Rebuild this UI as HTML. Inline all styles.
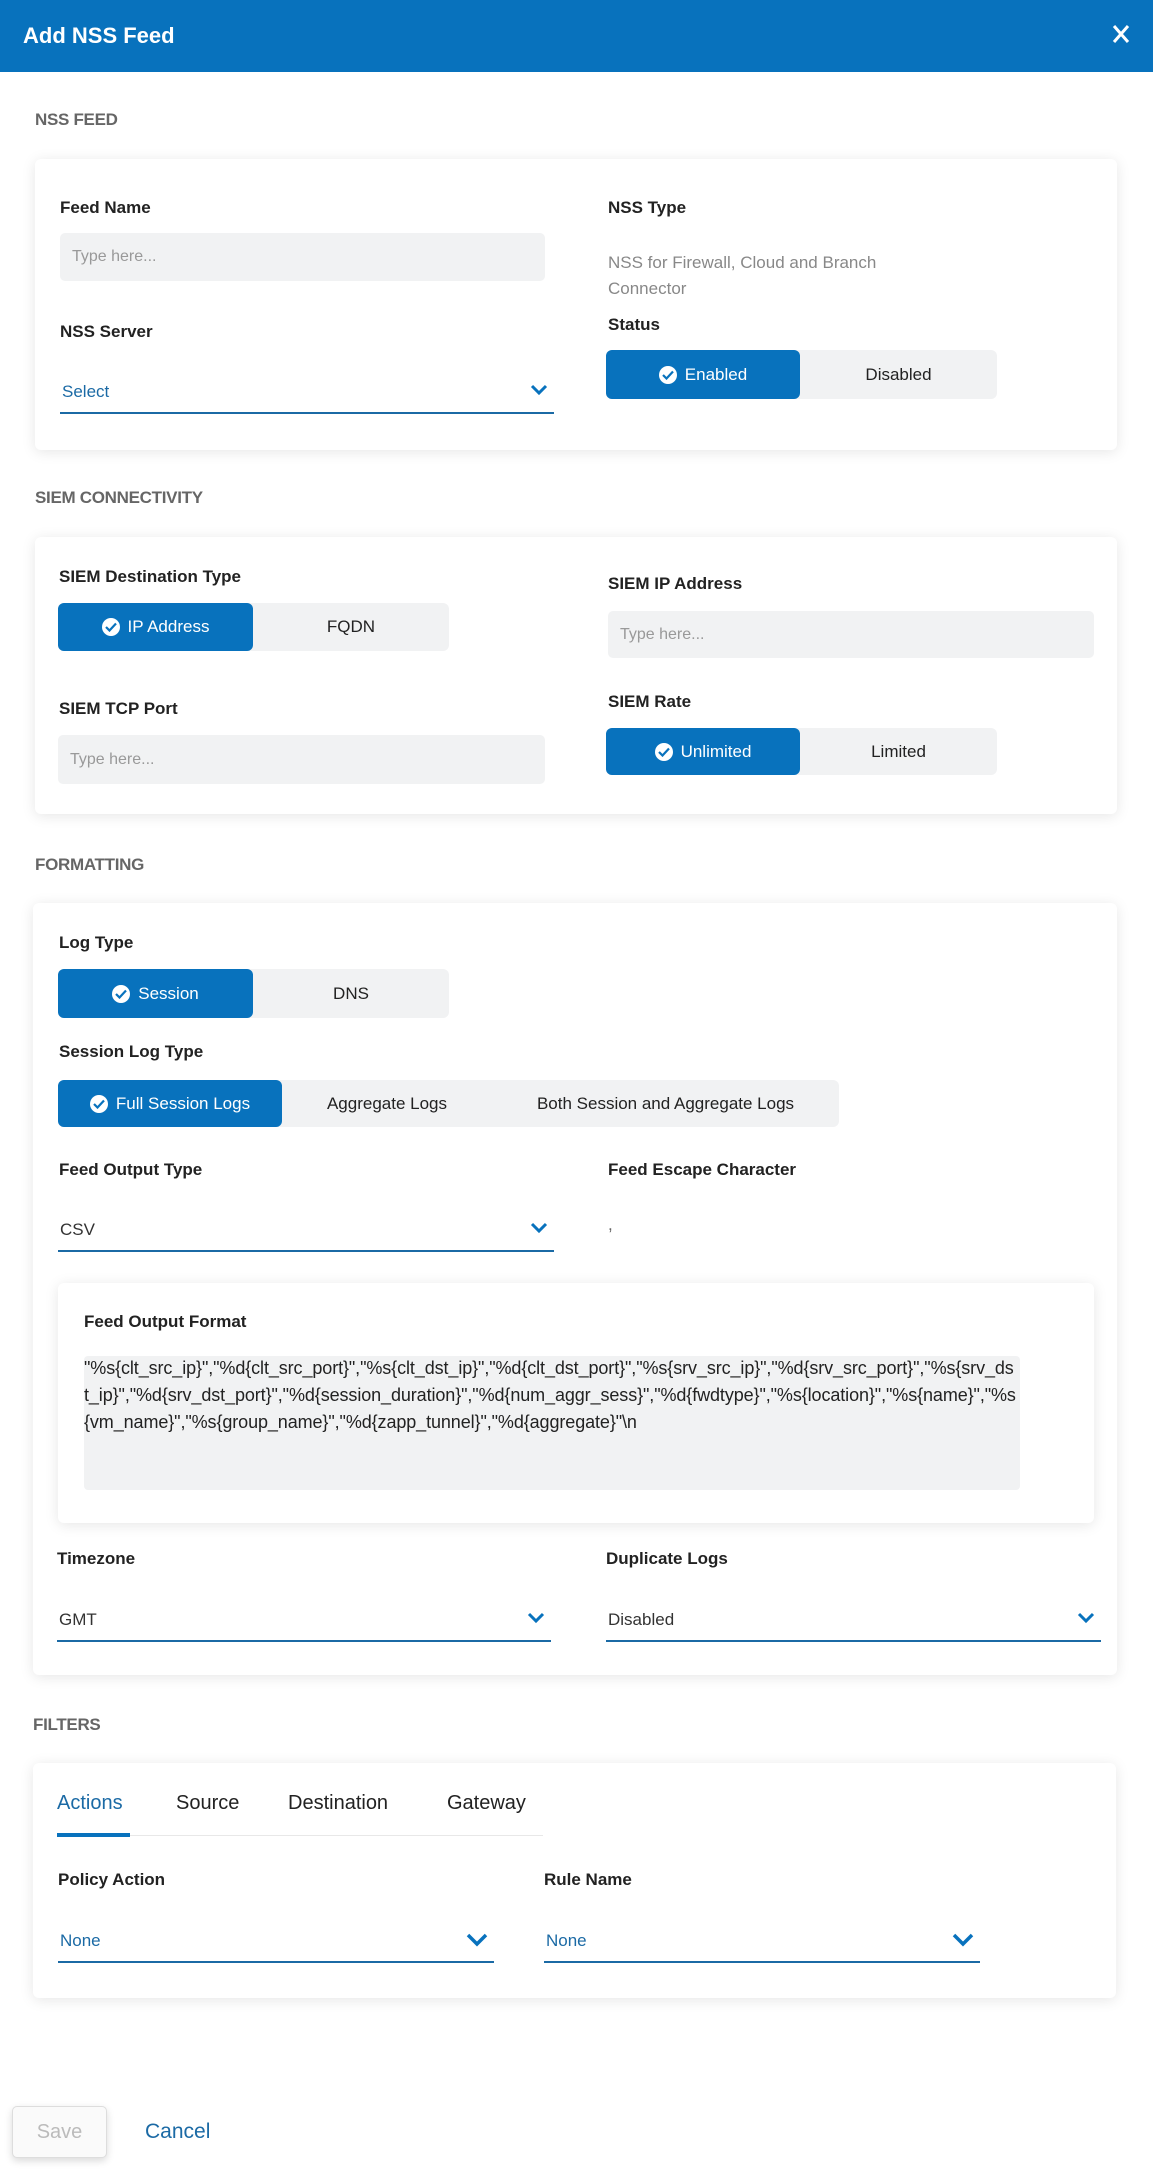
<!DOCTYPE html>
<html><head><meta charset="utf-8"><style>
*{margin:0;padding:0;box-sizing:border-box}
body{width:1153px;height:2171px;position:relative;background:#fff;font-family:"Liberation Sans",sans-serif;color:#222;overflow:hidden}
.a{position:absolute}
.t{position:absolute;line-height:24px;white-space:nowrap}
.lbl{font-size:17px;font-weight:bold;color:#222}
.sec{font-size:17px;color:#666;font-weight:bold;letter-spacing:-0.3px}
.card{position:absolute;background:#fff;border-radius:6px;box-shadow:0 2px 14px rgba(0,0,0,0.10)}
.inp{position:absolute;background:#f1f2f3;border-radius:5px;font-size:16px;color:#999;padding-left:12px;display:flex;align-items:center}
.sel{position:absolute;border-bottom:2px solid #1b6aa5;height:40px}
.sel span{position:absolute;left:2px;top:6px;font-size:17px;line-height:24px}
.sel svg{position:absolute;right:6px;top:10px}
.tog{position:absolute;background:#f1f2f3;border-radius:6px;display:flex}
.tog div{display:flex;align-items:center;justify-content:center;font-size:17px;color:#222;border-radius:6px;height:100%}
.tog .on{background:#0872bd;color:#fff}
.ck{display:inline-block;width:18px;height:18px;border-radius:50%;background:#fff;margin-right:8px;position:relative}
.ck svg{position:absolute;left:3px;top:4px}
</style></head><body>
<div class="a" style="left:0;top:0;width:1153px;height:72px;background:#0872bd"></div>
<div class="t" style="left:23px;top:24px;font-size:22px;font-weight:bold;color:#fff">Add NSS Feed</div>
<svg class="a" style="left:1111px;top:24px" width="20" height="20" viewBox="0 0 20 20"><path d="M3 2 L17 18 M17 2 L3 18" stroke="#fff" stroke-width="3"/></svg>

<div class="t sec" style="left:35px;top:108px">NSS FEED</div>
<div class="card" style="left:35px;top:159px;width:1082px;height:291px"></div>
<div class="t lbl" style="left:60px;top:196px">Feed Name</div>
<div class="inp" style="left:60px;top:233px;width:485px;height:48px">Type here...</div>
<div class="t lbl" style="left:608px;top:196px">NSS Type</div>
<div class="t" style="left:608px;top:250px;font-size:17px;color:#888;line-height:26px;white-space:normal;width:330px">NSS for Firewall, Cloud and Branch Connector</div>
<div class="t lbl" style="left:60px;top:320px">NSS Server</div>
<div class="sel" style="left:60px;top:374px;width:494px"><span style="color:#1b6aa5">Select</span><svg width="18" height="12" viewBox="0 0 18 12"><path d="M2 2 L9 9 L16 2" stroke="#0872bd" stroke-width="3" fill="none"/></svg></div>
<div class="t lbl" style="left:608px;top:313px">Status</div>
<div class="tog" style="left:606px;top:350px;width:391px;height:49px"><div class="on" style="width:194px"><span class="ck"><svg width="12" height="10" viewBox="0 0 12 10"><path d="M1 5 L4.5 8.5 L11 1.5" stroke="#0872bd" stroke-width="2.2" fill="none"/></svg></span>Enabled</div><div style="flex:1">Disabled</div></div>

<div class="t sec" style="left:35px;top:486px">SIEM CONNECTIVITY</div>
<div class="card" style="left:35px;top:537px;width:1082px;height:277px"></div>
<div class="t lbl" style="left:59px;top:565px">SIEM Destination Type</div>
<div class="tog" style="left:58px;top:603px;width:391px;height:48px"><div class="on" style="width:195px"><span class="ck"><svg width="12" height="10" viewBox="0 0 12 10"><path d="M1 5 L4.5 8.5 L11 1.5" stroke="#0872bd" stroke-width="2.2" fill="none"/></svg></span>IP Address</div><div style="flex:1">FQDN</div></div>
<div class="t lbl" style="left:608px;top:572px">SIEM IP Address</div>
<div class="inp" style="left:608px;top:611px;width:486px;height:47px">Type here...</div>
<div class="t lbl" style="left:59px;top:697px">SIEM TCP Port</div>
<div class="inp" style="left:58px;top:735px;width:487px;height:49px">Type here...</div>
<div class="t lbl" style="left:608px;top:690px">SIEM Rate</div>
<div class="tog" style="left:606px;top:728px;width:391px;height:47px"><div class="on" style="width:194px"><span class="ck"><svg width="12" height="10" viewBox="0 0 12 10"><path d="M1 5 L4.5 8.5 L11 1.5" stroke="#0872bd" stroke-width="2.2" fill="none"/></svg></span>Unlimited</div><div style="flex:1">Limited</div></div>

<div class="t sec" style="left:35px;top:853px">FORMATTING</div>
<div class="card" style="left:33px;top:903px;width:1084px;height:772px"></div>
<div class="t lbl" style="left:59px;top:931px">Log Type</div>
<div class="tog" style="left:58px;top:969px;width:391px;height:49px"><div class="on" style="width:195px"><span class="ck"><svg width="12" height="10" viewBox="0 0 12 10"><path d="M1 5 L4.5 8.5 L11 1.5" stroke="#0872bd" stroke-width="2.2" fill="none"/></svg></span>Session</div><div style="flex:1">DNS</div></div>
<div class="t lbl" style="left:59px;top:1040px">Session Log Type</div>
<div class="tog" style="left:58px;top:1080px;width:781px;height:47px"><div class="on" style="width:224px"><span class="ck"><svg width="12" height="10" viewBox="0 0 12 10"><path d="M1 5 L4.5 8.5 L11 1.5" stroke="#0872bd" stroke-width="2.2" fill="none"/></svg></span>Full Session Logs</div><div style="width:210px">Aggregate Logs</div><div style="flex:1">Both Session and Aggregate Logs</div></div>
<div class="t lbl" style="left:59px;top:1158px">Feed Output Type</div>
<div class="sel" style="left:58px;top:1212px;width:496px"><span style="color:#333">CSV</span><svg width="18" height="12" viewBox="0 0 18 12"><path d="M2 2 L9 9 L16 2" stroke="#0872bd" stroke-width="3" fill="none"/></svg></div>
<div class="t lbl" style="left:608px;top:1158px">Feed Escape Character</div>
<div class="t" style="left:608px;top:1213px;font-size:17px;color:#666">,</div>
<div class="card" style="left:58px;top:1283px;width:1036px;height:240px"></div>
<div class="t lbl" style="left:84px;top:1310px">Feed Output Format</div>
<div class="a" style="left:84px;top:1356px;width:936px;height:134px;background:#f1f2f3;border-radius:4px"></div>
<div class="a" style="left:84px;top:1355px;width:934px;font-size:18px;line-height:27px;color:#222;word-break:break-all;letter-spacing:-0.1px">"%s{clt_src_ip}","%d{clt_src_port}","%s{clt_dst_ip}","%d{clt_dst_port}","%s{srv_src_ip}","%d{srv_src_port}","%s{srv_dst_ip}","%d{srv_dst_port}","%d{session_duration}","%d{num_aggr_sess}","%d{fwdtype}","%s{location}","%s{name}","%s{vm_name}","%s{group_name}","%d{zapp_tunnel}","%d{aggregate}"\n</div>
<div class="t lbl" style="left:57px;top:1547px">Timezone</div>
<div class="sel" style="left:57px;top:1602px;width:494px"><span style="color:#333">GMT</span><svg width="18" height="12" viewBox="0 0 18 12"><path d="M2 2 L9 9 L16 2" stroke="#0872bd" stroke-width="3" fill="none"/></svg></div>
<div class="t lbl" style="left:606px;top:1547px">Duplicate Logs</div>
<div class="sel" style="left:606px;top:1602px;width:495px"><span style="color:#333">Disabled</span><svg width="18" height="12" viewBox="0 0 18 12"><path d="M2 2 L9 9 L16 2" stroke="#0872bd" stroke-width="3" fill="none"/></svg></div>

<div class="t sec" style="left:33px;top:1713px">FILTERS</div>
<div class="card" style="left:33px;top:1763px;width:1083px;height:235px"></div>
<div class="t" style="left:57px;top:1791px;font-size:20px;color:#1b6aa5">Actions</div>
<div class="t" style="left:176px;top:1791px;font-size:20px;color:#222">Source</div>
<div class="t" style="left:288px;top:1791px;font-size:20px;color:#222">Destination</div>
<div class="t" style="left:447px;top:1791px;font-size:20px;color:#222">Gateway</div>
<div class="a" style="left:57px;top:1835px;width:486px;height:1px;background:#e8e8e8"></div>
<div class="a" style="left:57px;top:1833px;width:73px;height:4px;background:#0872bd"></div>
<div class="t lbl" style="left:58px;top:1868px">Policy Action</div>
<div class="t lbl" style="left:544px;top:1868px">Rule Name</div>
<div class="sel" style="left:58px;top:1923px;width:436px"><span style="color:#1b6aa5">None</span><svg width="22" height="14" viewBox="0 0 22 14"><path d="M2 2 L11 11 L20 2" stroke="#0872bd" stroke-width="3.5" fill="none"/></svg></div>
<div class="sel" style="left:544px;top:1923px;width:436px"><span style="color:#1b6aa5">None</span><svg width="22" height="14" viewBox="0 0 22 14"><path d="M2 2 L11 11 L20 2" stroke="#0872bd" stroke-width="3.5" fill="none"/></svg></div>

<div class="a" style="left:12px;top:2106px;width:95px;height:52px;border:1px solid #ddd;border-radius:5px;background:#fafafa;box-shadow:0 3px 8px rgba(0,0,0,0.15);display:flex;align-items:center;justify-content:center;font-size:20px;color:#bbb">Save</div>
<div class="t" style="left:145px;top:2120px;font-size:21px;color:#1b6aa5">Cancel</div>
</body></html>
